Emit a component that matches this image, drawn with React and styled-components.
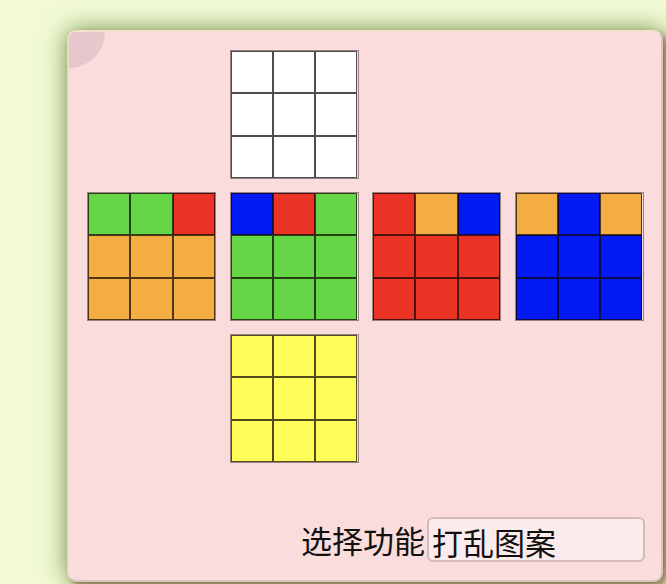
import React from "react";
import styled, { createGlobalStyle } from "styled-components";

const GlobalStyle = createGlobalStyle`
  html, body {
    margin: 0;
    padding: 0;
    background: #f1fad4;
    font-family: "Noto Sans CJK SC", "Noto Sans", sans-serif;
  }
`;

const colors = {
  W: "#ffffff",
  G: "#65d747",
  R: "#eb3325",
  O: "#f3ad41",
  B: "#0319f2",
  Y: "#fffd58",
};

const faces = [
  { id: "up", col: 2, row: 1, cells: "WWWWWWWWW" },
  { id: "left", col: 1, row: 2, cells: "GGROOOOOO" },
  { id: "front", col: 2, row: 2, cells: "BRGGGGGGG" },
  { id: "right", col: 3, row: 2, cells: "ROBRRRRRR" },
  { id: "back", col: 4, row: 2, cells: "OBOBBBBBB" },
  { id: "down", col: 2, row: 3, cells: "YYYYYYYYY" },
];

const Page = styled.div`
  padding: 30px 0 0 67px;
  height: 584px;
  box-sizing: border-box;
  overflow: hidden;
`;

const Panel = styled.div`
  position: relative;
  width: 596px;
  height: 552px;
  box-sizing: border-box;
  background: #fadcdd;
  border: 2px solid #dcc2c5;
  border-top-color: #f0e2cf;
  border-left-color: #ead8cc;
  border-radius: 9px;
  box-shadow: 0 0 24px rgba(60, 95, 10, 0.7), 4px 4px 6px rgba(100, 25, 10, 0.5);
  padding: 18px 16px 18px 18px;
  display: flex;
  flex-direction: column;
  overflow: hidden;

  &::before {
    content: "";
    position: absolute;
    left: -36px;
    top: -36px;
    width: 72px;
    height: 72px;
    border-radius: 50%;
    background: rgba(190, 150, 165, 0.3);
  }
`;

const Net = styled.div`
  display: grid;
  grid-template-columns: repeat(4, 129px);
  grid-template-rows: repeat(3, 129px);
  column-gap: 13.5px;
  row-gap: 13px;
`;

const Face = styled.div`
  grid-column: ${(p) => p.$col};
  grid-row: ${(p) => p.$row};
  display: grid;
  grid-template-columns: repeat(3, 1fr);
  grid-template-rows: repeat(3, 1fr);
  box-sizing: border-box;
  border: 1px solid rgba(70, 55, 55, 0.55);
`;

const Cell = styled.div`
  background: ${(p) => p.$color};
  border: 1px solid rgba(15, 5, 5, 0.72);
`;

const Controls = styled.div`
  margin-top: auto;
  display: flex;
  justify-content: flex-end;
  align-items: center;
  gap: 2px;
`;

const Label = styled.span`
  font-size: 31px;
  line-height: 1;
  color: #111;
`;

const Select = styled.select`
  appearance: none;
  -webkit-appearance: none;
  width: 218px;
  height: 45px;
  box-sizing: border-box;
  border: 2px solid #d5b9bd;
  border-radius: 6px;
  background: #fcebed;
  font-family: "Noto Sans CJK SC", "Noto Sans", sans-serif;
  font-size: 31px;
  color: #111;
  padding: 0 0 0 3px;
  outline: none;
`;

export default function App() {
  return (
    <>
      <GlobalStyle />
      <Page>
        <Panel>
          <Net>
            {faces.map((face) => (
              <Face key={face.id} $col={face.col} $row={face.row}>
                {face.cells.split("").map((c, i) => (
                  <Cell key={i} $color={colors[c]} />
                ))}
              </Face>
            ))}
          </Net>
          <Controls>
            <Label>选择功能</Label>
            <Select defaultValue="scramble">
              <option value="scramble">打乱图案</option>
              <option value="solve">还原</option>
            </Select>
          </Controls>
        </Panel>
      </Page>
    </>
  );
}
